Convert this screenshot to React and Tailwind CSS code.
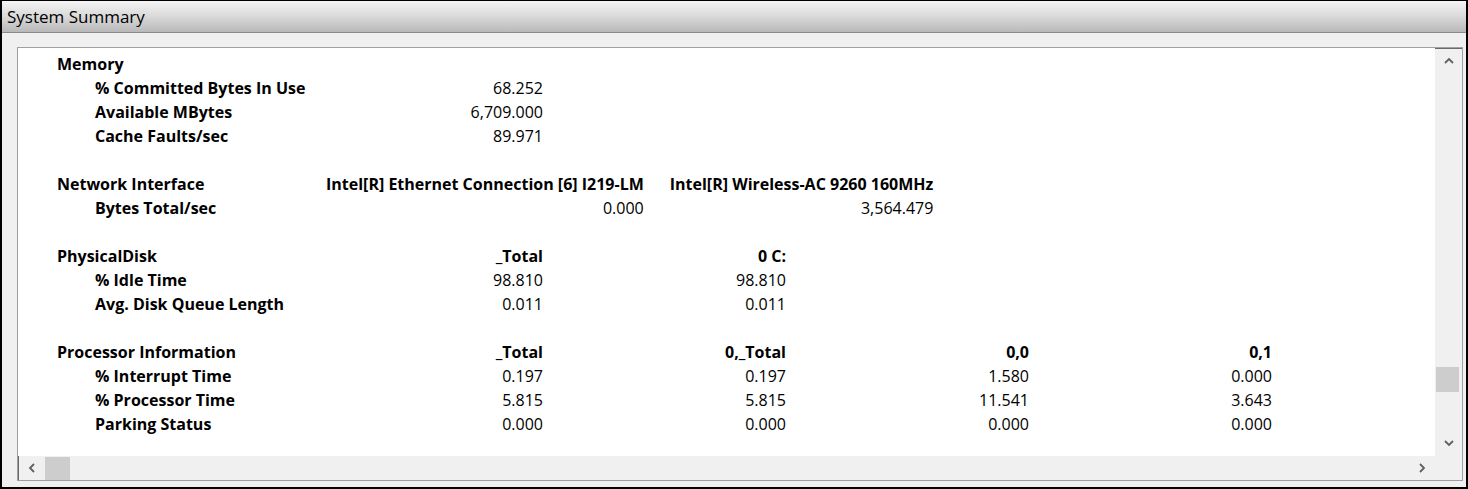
import React from "react";

const font = { fontFamily: '"Open Sans", "Noto Sans", sans-serif' };

const sections = [
  {
    title: "Memory",
    headers: [],
    rows: [
      ["% Committed Bytes In Use", ["68.252"]],
      ["Available MBytes", ["6,709.000"]],
      ["Cache Faults/sec", ["89.971"]],
    ],
  },
  {
    title: "Network Interface",
    headers: ["Intel[R] Ethernet Connection [6] I219-LM", "Intel[R] Wireless-AC 9260 160MHz"],
    rows: [["Bytes Total/sec", ["0.000", "3,564.479"]]],
  },
  {
    title: "PhysicalDisk",
    headers: ["_Total", "0 C:"],
    rows: [
      ["% Idle Time", ["98.810", "98.810"]],
      ["Avg. Disk Queue Length", ["0.011", "0.011"]],
    ],
  },
  {
    title: "Processor Information",
    headers: ["_Total", "0,_Total", "0,0", "0,1"],
    rows: [
      ["% Interrupt Time", ["0.197", "0.197", "1.580", "0.000"]],
      ["% Processor Time", ["5.815", "5.815", "11.541", "3.643"]],
      ["Parking Status", ["0.000", "0.000", "0.000", "0.000"]],
    ],
  },
];

function Section({ s }) {
  const ncols = Math.max(s.headers.length, ...s.rows.map((r) => r[1].length));
  const cols = Array.from({ length: ncols }, (_, i) => i);
  return (
    <div className="grid w-max" style={{ gridTemplateColumns: `243px repeat(${ncols}, minmax(243px, max-content))` }}>
      <div className="h-6 flex items-center font-bold whitespace-nowrap">{s.title}</div>
      {cols.map((i) => (
        <div key={i} className="h-6 flex items-center justify-end pl-[26px] font-bold whitespace-nowrap">
          {s.headers[i] || ""}
        </div>
      ))}
      {s.rows.map(([label, vals]) => (
        <React.Fragment key={label}>
          <div className="h-6 flex items-center pl-[38px] font-bold whitespace-nowrap">{label}</div>
          {cols.map((i) => (
            <div key={i} className="h-6 flex items-center justify-end pl-[26px] whitespace-nowrap">
              {vals[i] || ""}
            </div>
          ))}
        </React.Fragment>
      ))}
    </div>
  );
}

function Chevron({ dir }) {
  const paths = {
    up: "M1 6 L5 2 L9 6",
    down: "M1 2 L5 6 L9 2",
    left: "M6 1 L2 5 L6 9",
    right: "M2 1 L6 5 L2 9",
  };
  const vert = dir === "up" || dir === "down";
  return (
    <svg width={vert ? 10 : 8} height={vert ? 8 : 10} viewBox={vert ? "0 0 10 8" : "0 0 8 10"}>
      <path d={paths[dir]} fill="none" stroke="#606060" strokeWidth="1.8" />
    </svg>
  );
}

export default function App() {
  return (
    <div className="w-[1468px] h-[489px] bg-[#f0f0f0] border-2 border-t-0 border-black flex flex-col text-black" style={font}>
      <div className="h-[33px] shrink-0 flex items-center pl-[5px] border-b border-[#8a8a8a] bg-gradient-to-b from-[#f4f4f4] via-[#d9d9d9] to-[#b9b9b9] border-t border-t-black text-[17px]">
        System Summary
      </div>
      <div className="flex-1 pl-[15px] pr-[3px] pt-[14px] pb-[6px] flex">
        <div className="flex-1 border border-[#a0a0a0] shadow-[inset_1px_1px_0_#696969] bg-[#f0f0f0] flex flex-col">
          <div className="flex-1 flex min-h-0">
            <div className="flex-1 bg-white overflow-hidden pl-[39px] pt-[4px] text-[16px] leading-none">
              <div className="flex flex-col gap-6">
                {sections.map((s) => (
                  <Section key={s.title} s={s} />
                ))}
              </div>
            </div>
            <div className="w-[27px] shrink-0 flex flex-col items-center">
              <div className="h-[26px] flex items-center justify-center w-full"><Chevron dir="up" /></div>
              <div className="flex-1 w-full relative">
                <div className="absolute left-[1px] right-[3px] top-[293px] h-[25px] bg-[#cdcdcd]" />
              </div>
              <div className="h-[26px] flex items-center justify-center w-full"><Chevron dir="down" /></div>
            </div>
          </div>
          <div className="h-[24px] shrink-0 flex items-center">
            <div className="w-[27px] h-full flex items-center justify-center"><Chevron dir="left" /></div>
            <div className="w-[25px] h-[23px] bg-[#cdcdcd]" />
            <div className="flex-1" />
            <div className="w-[27px] h-full flex items-center justify-center"><Chevron dir="right" /></div>
            <div className="w-[27px]" />
          </div>
        </div>
      </div>
    </div>
  );
}
